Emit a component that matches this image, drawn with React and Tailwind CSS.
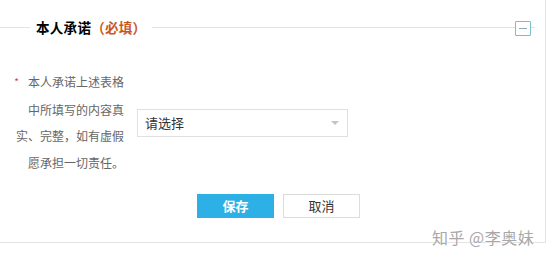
export default function App() {
  const cjk = { fontFamily: '"Noto Sans CJK SC", "Noto Sans", sans-serif' };
  const lines = ['中所填写的内容真', '实、完整，如有虚假', '愿承担一切责任。'];

  return (
    <div className="relative w-[549px] h-[262px] bg-white" style={cjk}>
      <div className="w-[546px] h-[243px] border-r border-b border-[#e3e3e3]">
        {/* section header */}
        <div className="flex items-center h-[16px] pt-[19px] box-content">
          <div className="w-[30px] h-px bg-[#e3e3e3]" />
          <div className="px-[6px] text-[13.5px] font-bold leading-[16px] whitespace-nowrap tracking-[0.3px]">
            <span className="text-black">本人承诺</span>
            <span className="text-[#c9581f]">（必填）</span>
          </div>
          <div className="flex-1 h-px bg-[#e3e3e3]" />
          <button className="w-[16px] h-[15px] mt-[3px] border border-[#7cbccf] rounded-[1px] flex items-center justify-center bg-white">
            <span className="block w-[8px] h-px bg-[#8aaab5]" />
          </button>
          <div className="w-[4px] h-px bg-[#e3e3e3]" />
          <div className="w-[10px]" />
        </div>

        {/* form row */}
        <div className="flex items-center mt-[34px]">
          <div className="w-[124px] text-right text-[12px] leading-[26.5px] text-[#666] whitespace-nowrap">
            <div>
              <span className="text-[#e4393c] text-[10px] mr-[9px] relative -top-[1px]">*</span>
              本人承诺上述表格
            </div>
            {lines.map((l) => (
              <div key={l}>{l}</div>
            ))}
          </div>
          <div className="ml-[13px] w-[211px] h-[28px] border border-[#e0e0e0] flex items-center justify-between pl-[7px] pr-[8px]">
            <span className="text-[13px] text-[#333]">请选择</span>
            <span className="w-0 h-0 border-l-[4px] border-r-[4px] border-t-[4px] border-l-transparent border-r-transparent border-t-[#c4c4c4]" />
          </div>
        </div>

        {/* buttons */}
        <div className="flex gap-[9px] mt-[18px] pl-[197px]">
          <button className="w-[77px] h-[24px] bg-[#2db0e6] text-white text-[13px] font-bold">
            保存
          </button>
          <button className="w-[77px] h-[24px] bg-white border border-[#dcdcdc] text-[#333] text-[13px]">
            取消
          </button>
        </div>
      </div>

      <div
        className="absolute left-[432px] top-[226px] text-[16px] leading-[22px] text-[#a8a8a8] tracking-[0.5px]"
        style={{ textShadow: '0 0 1px #fff, 0 0 1px #fff' }}
      >
        知乎 @李奥妹
      </div>
    </div>
  );
}
